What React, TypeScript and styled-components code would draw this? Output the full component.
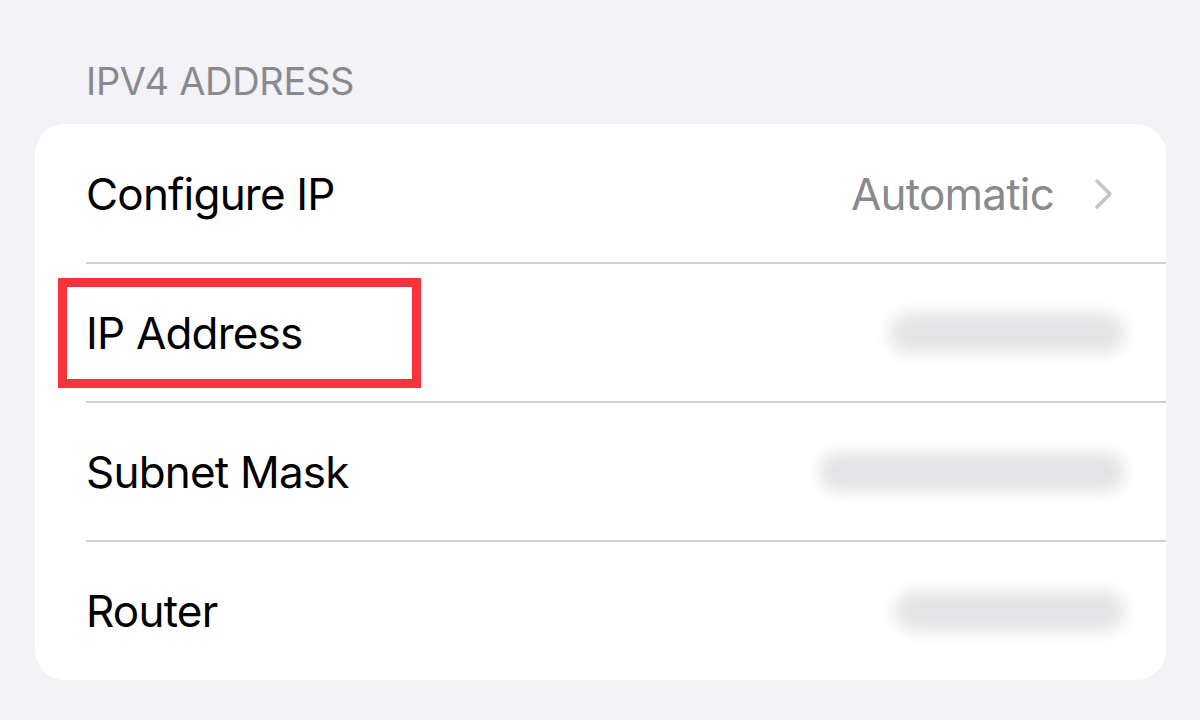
import styled, { createGlobalStyle } from 'styled-components'

const GlobalStyle = createGlobalStyle`
    html, body {
        margin: 0;
        padding: 0;
        background: #f2f2f7;
        font-family: Inter, 'Liberation Sans', sans-serif;
        -webkit-font-smoothing: antialiased;
    }
`

type Row = {
    label: string
    value?: string
    blurWidth?: number
    chevron?: boolean
    highlighted?: boolean
}

const ROWS: Row[] = [
    { label: 'Configure IP', value: 'Automatic', chevron: true },
    { label: 'IP Address', blurWidth: 236, highlighted: true },
    { label: 'Subnet Mask', blurWidth: 306 },
    { label: 'Router', blurWidth: 230 },
]

export default function App() {
    return (
        <>
            <GlobalStyle />
            <Page>
                <SectionHeader>IPV4 ADDRESS</SectionHeader>
                <Card>
                    {ROWS.map((row) => (
                        <RowItem key={row.label}>
                            {row.highlighted && <Highlight />}
                            <Label>{row.label}</Label>
                            <Trailing>
                                {row.value && <Value>{row.value}</Value>}
                                {row.blurWidth && <Blurred style={{ width: row.blurWidth }} />}
                                {row.chevron && (
                                    <Chevron width="20" height="32" viewBox="0 0 20 32">
                                        <path
                                            d="M3 3 L16 16 L3 29"
                                            fill="none"
                                            stroke="#c4c4c7"
                                            strokeWidth="3.4"
                                            strokeLinecap="round"
                                            strokeLinejoin="round"
                                        />
                                    </Chevron>
                                )}
                            </Trailing>
                        </RowItem>
                    ))}
                </Card>
            </Page>
        </>
    )
}

const Page = styled.div`
    width: 1200px;
    height: 720px;
    box-sizing: border-box;
    padding: 58px 34px 0 35px;
    display: flex;
    flex-direction: column;
    overflow: hidden;
`

const SectionHeader = styled.div`
    font-size: 38px;
    line-height: 46px;
    color: #8a8a8e;
    padding-left: 51px;
    letter-spacing: -0.3px;
    margin-bottom: 20px;
`

const Card = styled.div`
    background: #ffffff;
    border-radius: 30px;
    display: flex;
    flex-direction: column;
`

const RowItem = styled.div`
    position: relative;
    height: 139px;
    display: flex;
    align-items: center;
    justify-content: space-between;
    padding: 0 52px 0 51px;

    & + &::before {
        content: '';
        position: absolute;
        top: -1px;
        left: 51px;
        right: 0;
        height: 2px;
        background: #d1d1d5;
    }
`

const Label = styled.span`
    font-size: 44px;
    color: #000000;
    letter-spacing: -0.8px;
`

const Trailing = styled.div`
    display: flex;
    align-items: center;
    gap: 40px;
`

const Value = styled.span`
    font-size: 44px;
    color: #8a8a8e;
    letter-spacing: -0.8px;
`

const Blurred = styled.div`
    height: 40px;
    margin-right: -11px;
    border-radius: 20px;
    background: #e4e4e6;
    filter: blur(8px);
`

const Chevron = styled.svg`
    display: block;
`

const Highlight = styled.div`
    position: absolute;
    left: 23px;
    top: 15px;
    width: 363px;
    height: 110px;
    box-sizing: border-box;
    border: 9px solid #f7333c;
    pointer-events: none;
`
